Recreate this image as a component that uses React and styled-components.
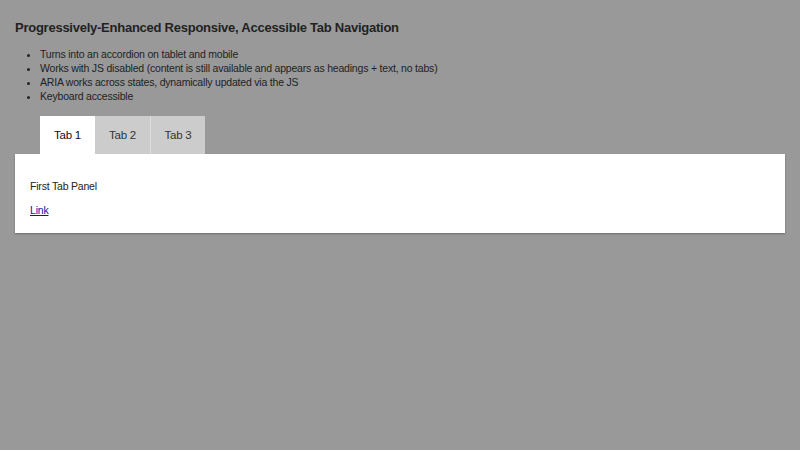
import React, { useState } from 'react';
import styled, { createGlobalStyle } from 'styled-components';

const GlobalStyle = createGlobalStyle`
  html, body {
    margin: 0;
    background: #999999;
  }
  body {
    font-family: "Liberation Sans", Arial, sans-serif;
    color: #222;
  }
`;

const Page = styled.div`
  padding: 19px 15px;
`;

const Title = styled.h1`
  font-size: 13px;
  letter-spacing: -0.25px;
  font-weight: bold;
  line-height: 18px;
  margin: 0 0 10px;
  color: #222;
`;

const Features = styled.ul`
  margin: 0 0 13px;
  padding-left: 25px;
  font-size: 10.5px;
  letter-spacing: -0.2px;
  line-height: 14px;
  color: #222;
`;

const TabList = styled.div`
  display: flex;
  padding-left: 25px;
`;

const Tab = styled.button`
  width: 55px;
  height: 38px;
  border: none;
  border-left: ${p => (p.$first ? 'none' : '1px solid #dedede')};
  background: ${p => (p.$active ? '#fff' : '#cccccc')};
  color: ${p => (p.$active ? '#111' : '#333')};
  font-family: inherit;
  font-size: 11.5px;
  letter-spacing: -0.25px;
  padding: 0;
  cursor: pointer;
`;

const Panel = styled.div`
  background: #fff;
  padding: 25px 15px 16px;
  box-shadow: 0 1px 2px rgba(0, 0, 0, 0.3);
  font-size: 10.5px;
  letter-spacing: -0.2px;
  line-height: 14px;
  color: #222;

  p {
    margin: 0 0 10px;
  }
  a {
    color: #1a0dab;
  }
`;

const tabs = [
  { label: 'Tab 1', text: 'First Tab Panel' },
  { label: 'Tab 2', text: 'Second Tab Panel' },
  { label: 'Tab 3', text: 'Third Tab Panel' },
];

export default function App() {
  const [active, setActive] = useState(0);
  return (
    <Page>
      <GlobalStyle />
      <Title>Progressively-Enhanced Responsive, Accessible Tab Navigation</Title>
      <Features>
        <li>Turns into an accordion on tablet and mobile</li>
        <li>Works with JS disabled (content is still available and appears as headings + text, no tabs)</li>
        <li>ARIA works across states, dynamically updated via the JS</li>
        <li>Keyboard accessible</li>
      </Features>
      <TabList role="tablist">
        {tabs.map((t, i) => (
          <Tab
            key={t.label}
            role="tab"
            aria-selected={i === active}
            $active={i === active}
            $first={i === 0 || i === active || i - 1 === active}
            onClick={() => setActive(i)}
          >
            {t.label}
          </Tab>
        ))}
      </TabList>
      <Panel role="tabpanel">
        <p>{tabs[active].text}</p>
        <a href="#">Link</a>
      </Panel>
    </Page>
  );
}
